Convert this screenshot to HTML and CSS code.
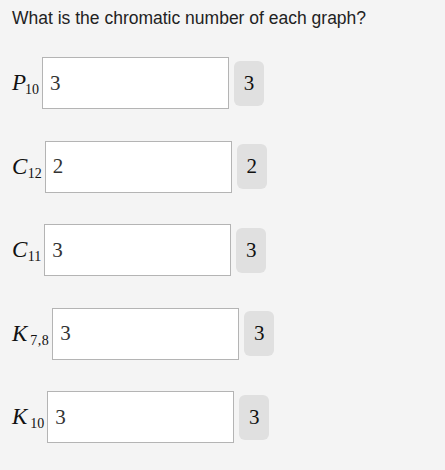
FILE: index.html
```html
<!DOCTYPE html>
<html lang="en">
	<head>
		<meta charset="utf-8" />
		<link rel="stylesheet" href="styles.css">
	</head>
	<body>
		<div class="page">
			<p class="question">What is the chromatic number of each graph?</p>
			<div class="rows">
				<div class="row">
					<span class="math"><i>P</i><sub>10</sub></span>
					<input type="text" class="answer" value="3" />
					<span class="badge">3</span>
				</div>
				<div class="row">
					<span class="math"><i class="c">C</i><sub>12</sub></span>
					<input type="text" class="answer" value="2" />
					<span class="badge">2</span>
				</div>
				<div class="row">
					<span class="math"><i class="c">C</i><sub>11</sub></span>
					<input type="text" class="answer" value="3" />
					<span class="badge">3</span>
				</div>
				<div class="row">
					<span class="math"><i class="k">K</i><sub class="wide">7,8</sub></span>
					<input type="text" class="answer" value="3" />
					<span class="badge">3</span>
				</div>
				<div class="row">
					<span class="math"><i class="k">K</i><sub>10</sub></span>
					<input type="text" class="answer" value="3" />
					<span class="badge">3</span>
				</div>
			</div>
		</div>
	</body>
</html>
```

FILE: styles.css
```css
html, body {
	margin: 0;
	background-color: #f4f4f4;
}

.page {
	padding: 8px 12px;
	color: #111;
}

.question {
	margin: 0 0 29px 0;
	font-family: "Liberation Sans", Arial, sans-serif;
	font-size: 17.5px;
	line-height: 20px;
	color: #222;
}

.rows {
	display: flex;
	flex-direction: column;
	gap: 31.5px;
}

.row {
	display: flex;
	flex-direction: row;
	align-items: center;
}

.math {
	font-family: "Liberation Serif", "Times New Roman", serif;
	font-size: 23px;
	margin-right: 3px;
	white-space: nowrap;
}

.math i.c {
	padding-right: 1.5px;
}

.math i.k {
	padding-right: 4px;
}

.math sub {
	font-size: 14px;
	vertical-align: -4px;
	line-height: 0;
	margin-left: -1px;
}

.math sub.wide {
	letter-spacing: 0.5px;
}

.answer {
	box-sizing: border-box;
	width: 187px;
	height: 52px;
	margin: 0;
	padding: 0 7px;
	border: 1px solid #b4b4b4;
	border-radius: 0;
	background-color: #fff;
	font-family: "Liberation Serif", "Times New Roman", serif;
	font-size: 21px;
	color: #333;
	outline: none;
}

.badge {
	display: flex;
	align-items: center;
	justify-content: center;
	width: 30px;
	height: 45px;
	margin-left: 5px;
	border-radius: 6px;
	background-color: #e0e0e0;
	font-family: "Liberation Serif", "Times New Roman", serif;
	font-size: 21px;
	color: #111;
}
```
